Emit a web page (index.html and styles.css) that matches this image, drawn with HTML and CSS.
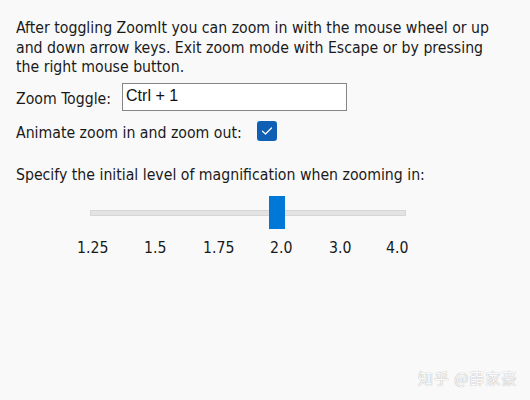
FILE: index.html
```html
<!DOCTYPE html>
<html>
<head>
<meta charset="utf-8">
<link rel="stylesheet" href="styles.css">
</head>
<body>
<div class="panel">
  <p class="intro">After toggling ZoomIt you can zoom in with the mouse wheel or up<br>and down arrow keys. Exit zoom mode with Escape or by pressing<br>the right mouse button.</p>
  <div class="row toggle-row">
    <span class="label">Zoom Toggle:</span>
    <div class="input">Ctrl + 1</div>
  </div>
  <div class="row check-row">
    <span class="label">Animate zoom in and zoom out:</span>
    <span class="checkbox"><svg width="12" height="10" viewBox="0 0 12 10"><path d="M1.5 5.2 L4.5 8 L10.5 2" fill="none" stroke="#fff" stroke-width="1.2" stroke-linecap="round" stroke-linejoin="round"/></svg></span>
  </div>
  <p class="specify">Specify the initial level of magnification when zooming in:</p>
  <div class="slider">
    <div class="track"><div class="thumb"></div></div>
  </div>
  <div class="ticks">
    <span>1.25</span><span>1.5</span><span>1.75</span><span>2.0</span><span>3.0</span><span>4.0</span>
  </div>
</div>
<div class="watermark">知乎 @薛家豪</div>
</body>
</html>
```
FILE: styles.css
```css
html, body {
  margin: 0;
  padding: 0;
}
body {
  width: 530px;
  height: 400px;
  background: #f9f9f9;
  color: #1a1a1a;
  font-family: "DejaVu Sans Condensed", "DejaVu Sans", sans-serif;
  font-size: 15.7px;
  line-height: 19.5px;
  position: relative;
  overflow: hidden;
}
.panel {
  padding: 18px 0 0 16px;
}
.intro {
  margin: 0;
  white-space: nowrap;
}
.row {
  display: flex;
  align-items: flex-start;
}
.toggle-row {
  margin-top: 6.5px;
  gap: 11px;
}
.toggle-row .label {
  margin-top: 6px;
}
.input {
  box-sizing: border-box;
  width: 225px;
  height: 28px;
  border: 1px solid #868686;
  background: #fff;
  padding: 0 0 0 3px;
  line-height: 24px;
  font-family: "Liberation Sans", Arial, sans-serif;
  font-size: 16px;
  color: #111;
}
.check-row {
  margin-top: 10px;
  gap: 15px;
}
.check-row .label {
  margin-top: 2px;
}
.checkbox {
  width: 20px;
  height: 20px;
  border-radius: 3px;
  background: #0f5fb5;
  display: flex;
  align-items: center;
  justify-content: center;
}
.specify {
  margin: 22.3px 0 0 0;
}
.slider {
  margin: 12.7px 0 0 74px;
  width: 316px;
  height: 33px;
  display: flex;
  align-items: center;
}
.track {
  position: relative;
  width: 316px;
  height: 6px;
  box-sizing: border-box;
  background: #e3e3e3;
  border: 1px solid #d6d6d6;
}
.thumb {
  position: absolute;
  left: 178px;
  top: -15px;
  width: 16px;
  height: 33px;
  background: #0078d7;
}
.ticks {
  display: flex;
  margin: 7.8px 0 0 61px;
}
.ticks span:nth-child(1) { width: 67px; }
.ticks span:nth-child(2) { width: 59px; }
.ticks span:nth-child(3) { width: 67px; }
.ticks span:nth-child(4) { width: 59px; }
.ticks span:nth-child(5) { width: 57px; }
.watermark {
  position: absolute;
  left: 418px;
  top: 368px;
  font-family: "Noto Sans CJK SC", sans-serif;
  font-size: 15px;
  line-height: 20px;
  letter-spacing: 1px;
  color: #fbfbfb;
  text-shadow: 0 0 1px #8c8c8c;
}
```
